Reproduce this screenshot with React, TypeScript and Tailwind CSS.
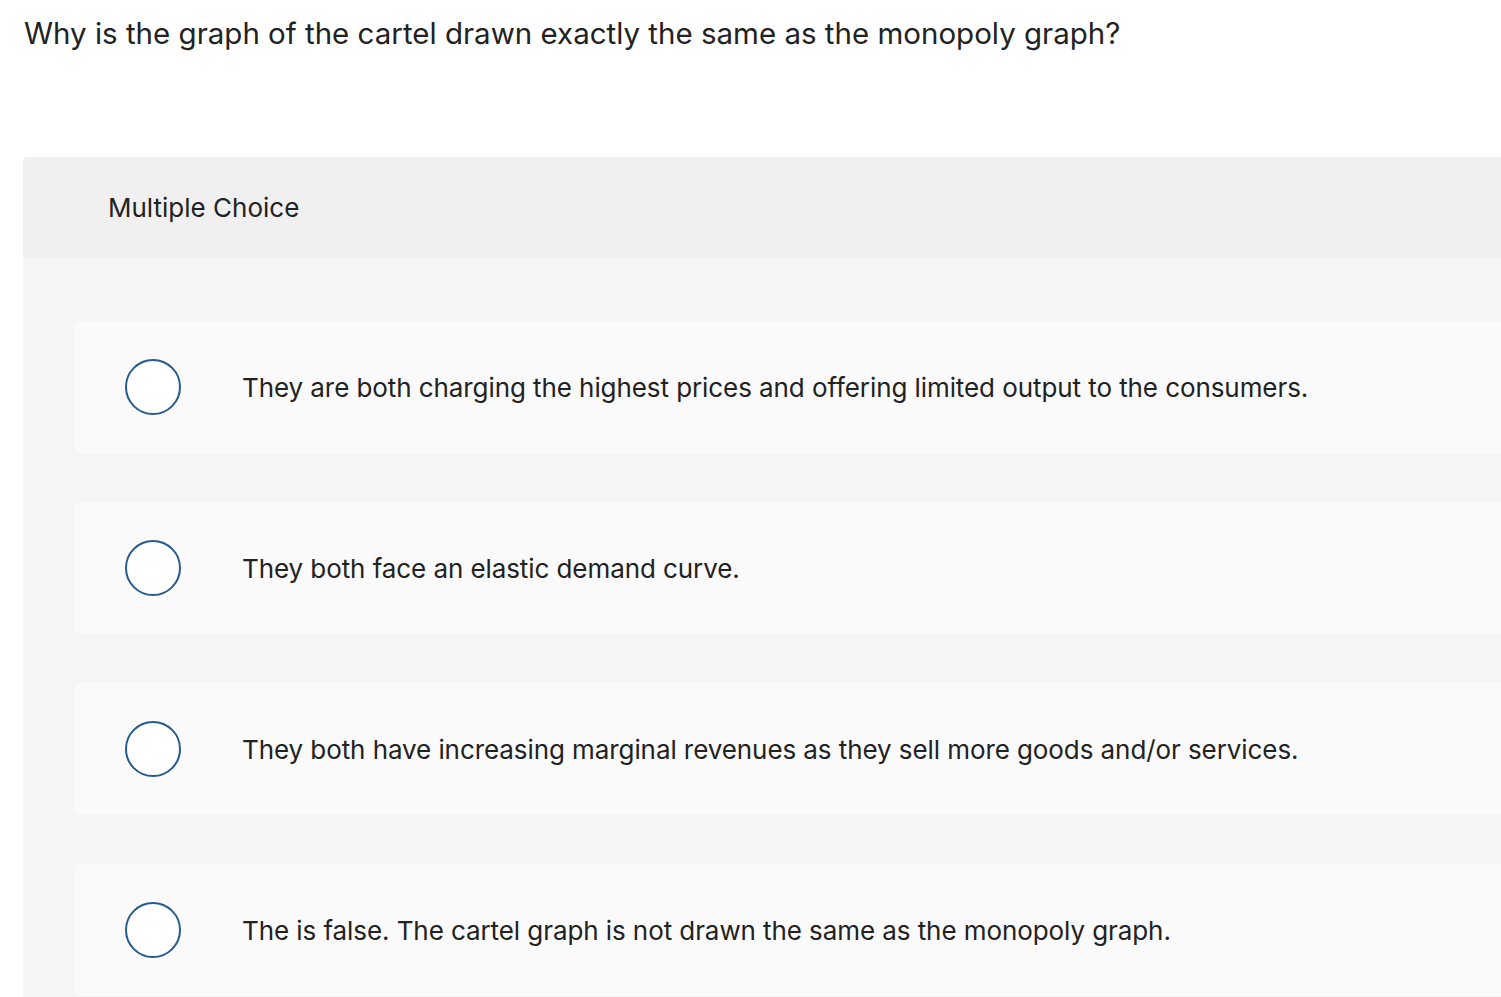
import React from "react";

const options = [
  "They are both charging the highest prices and offering limited output to the consumers.",
  "They both face an elastic demand curve.",
  "They both have increasing marginal revenues as they sell more goods and/or services.",
  "The is false. The cartel graph is not drawn the same as the monopoly graph.",
];

export default function App() {
  return (
    <div
      className="w-[1501px] h-[997px] overflow-hidden bg-white text-[#222222]"
      style={{ fontFamily: "Inter, Lato, sans-serif" }}
    >
      <div className="pl-[24px] pt-[13px] h-[157px]">
        <h1 className="text-[29.5px] leading-[40px] font-normal">
          Why is the graph of the cartel drawn exactly the same as the monopoly graph?
        </h1>
      </div>
      <div className="ml-[23px] w-[1520px] rounded-tl-[5px] overflow-hidden">
        <div className="h-[100px] bg-[#f0f0f0] flex items-center pl-[85px]">
          <span className="text-[26px]">Multiple Choice</span>
        </div>
        <div className="bg-[#f5f5f5] pl-[52px] pt-[64px] pb-[40px] flex flex-col gap-[49px]">
          {options.map((o) => (
            <div
              key={o}
              className="h-[132px] bg-[#fafafa] rounded-l-[5px] flex items-center pl-[50px]"
            >
              <div className="w-[56px] h-[56px] rounded-full border-2 border-[#255b8e] bg-white shrink-0" />
              <span className="ml-[61px] text-[26px] tracking-[-0.08px]">{o}</span>
            </div>
          ))}
        </div>
      </div>
    </div>
  );
}
